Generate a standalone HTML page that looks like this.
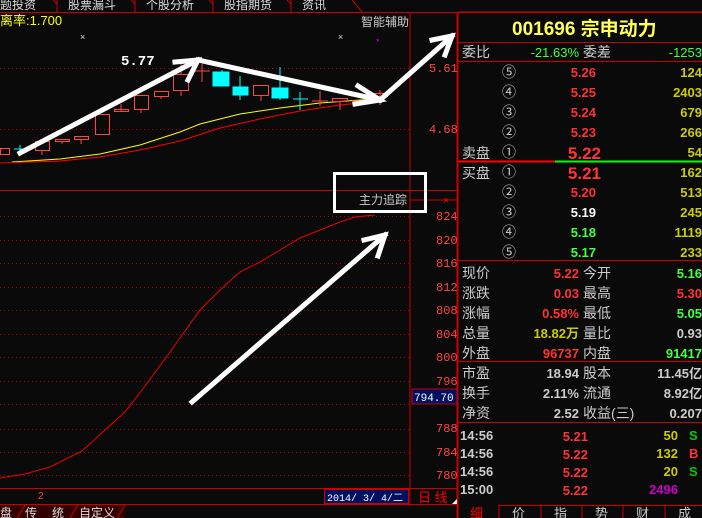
<!DOCTYPE html>
<html><head><meta charset="utf-8"><style>
body{margin:0;background:#0a0a0a;width:702px;height:518px;overflow:hidden}
svg{display:block;font-family:"Liberation Sans","Noto Sans CJK SC",sans-serif;font-size:13px}
.m{font-family:"Liberation Mono","Noto Sans CJK SC",monospace}
</style></head><body>
<svg width="702" height="518" xmlns="http://www.w3.org/2000/svg">
<rect width="702" height="518" fill="#0a0a0a"/>
<!-- top tabs -->
<g fill="#ddd" font-size="12">
<text x="0" y="9">题投资</text><text x="68" y="9">股票漏斗</text><text x="146" y="9">个股分析</text><text x="224" y="9">股指期货</text><text x="302" y="9">资讯</text>
</g>
<g stroke="#c00" fill="none">
<path d="M57 0V12M135 0V12M213 0V12M291 0V12M352 0L362 12M0 12.5H702"/>
<path d="M53 0L57 4M131 0L135 4M209 0L213 4M287 0L291 4"/>
<path d="M410 12V504M457 12V518M0 190.5H458M0 488.5H458M0 504.5H458M410 200H457"/>
</g>
<text x="0" y="25" fill="#ff0" font-size="13">离率:1.700</text>
<text x="361" y="26" fill="#ccc" font-size="12">智能辅助</text>
<text x="80" y="40" fill="#ddd" font-size="9">×</text><text x="338" y="40" fill="#ddd" font-size="9">×</text>
<text x="376" y="45" fill="#c0c" font-size="9">*</text>
<text x="121" y="65" fill="#fff" font-size="14" font-weight="bold" class="m">5.77</text>
<!-- dotted grid -->
<g stroke="#a00" stroke-dasharray="1 3">
<path d="M0 68.5H410M0 129.5H410"/>
<path d="M0 216.5H410M0 240.5H410M0 263.5H410M0 287.5H410M0 310.5H410M0 334.5H410M0 357.5H410M0 381.5H410M0 404.5H410M0 429.5H410M0 452.5H410M0 475.5H410"/>
</g>
<g fill="#f44" class="m" font-size="12"><text x="429" y="72">5.61</text><text x="429" y="133">4.68</text>
<text x="436" y="220">824</text><text x="436" y="244">820</text><text x="436" y="267">816</text><text x="436" y="291">812</text><text x="436" y="314">808</text><text x="436" y="338">804</text><text x="436" y="361">800</text><text x="436" y="385">796</text><text x="436" y="432">788</text><text x="436" y="456">784</text><text x="436" y="479">780</text></g>
<rect x="412" y="389" width="45" height="15" fill="#001060" stroke="#c00"/>
<text x="414" y="401" fill="#fff" class="m" font-size="11">794.70</text>
<text x="443" y="204" fill="#f00" font-size="11">×</text>
<!-- MAs -->
<polyline fill="none" stroke="#ff0" points="12,162 60,159 100,154 140,145 180,132 200,124 240,114 280,108 320,103 360,100 380,99"/>
<polyline fill="none" stroke="#f00" points="0,163 60,161 100,157 140,150 180,141 220,128 260,119 300,111 340,105 380,101"/>
<!-- candles -->
<g stroke="#f44" fill="none">
<rect x="0.5" y="148.5" width="9" height="6"/><rect x="35.5" y="141.5" width="14" height="9"/><path d="M42 150V155"/>
<rect x="55.5" y="139.5" width="14" height="2"/><path d="M62 141V144"/>
<rect x="74.5" y="136.5" width="14" height="3"/><path d="M81 139V144"/>
<rect x="95.5" y="114.5" width="14" height="20"/>
<rect x="114.5" y="109.5" width="14" height="2"/><path d="M121 104V112"/>
<rect x="134.5" y="95.5" width="14" height="14"/><path d="M141 109V113"/>
<rect x="154.5" y="91.5" width="14" height="5"/><path d="M161 96V99"/>
<rect x="173.5" y="74.5" width="15" height="16"/><path d="M181 60V75M181 90V96"/>
<path d="M194 71H210M202 64V82"/>
<rect x="253.5" y="85.5" width="15" height="10"/><path d="M261 95V101"/>
<path d="M312 101H328M320 91V106"/>
<rect x="332.5" y="98.5" width="15" height="3"/><path d="M340 101V110"/>
<path d="M352 101H368"/><rect x="373.5" y="93.5" width="14" height="3"/><path d="M380 90V105"/>
</g>
<g fill="#0ff" stroke="#0ff">
<path d="M14 149H26M20 145V152" fill="none"/>
<rect x="213" y="72" width="16" height="14"/><path d="M222 70V73"/>
<rect x="233" y="87" width="15" height="8"/><path d="M240 76V100"/>
<rect x="272" y="88" width="16" height="10"/><path d="M280 67V100"/>
<path d="M293 99H308M300 92V110" fill="none"/>
</g>
<!-- bottom curve -->
<polyline fill="none" stroke="#e00" points="0,478 25,474 50,467 82,451 105,430 125,412 145,386 165,359 185,331 200,310 220,290 240,272 260,262 280,250 300,238 320,230 340,222 355,217 375,215"/>
<!-- white arrows -->
<g stroke="#fff" stroke-width="5" fill="none" stroke-linecap="square">
<path d="M20 153L198 60M175 62L198 60L188 80"/>
<path d="M198 60L380 100M358 86L380 100L355 104"/>
<path d="M380 100L452 36M432 40L452 36L445 55"/>
<path d="M192 402L385 235M364 240L385 235L378 256"/>
</g>
<rect x="334.5" y="173.5" width="91" height="38" fill="none" stroke="#fff" stroke-width="3"/>
<text x="359" y="204" fill="#ccc" font-size="12">主力追踪</text>
<!-- bottom bar -->
<text x="38" y="499" fill="#f44" font-size="10">2</text>
<rect x="324.5" y="489.5" width="84" height="14" fill="#001060" stroke="#c00"/>
<text x="327" y="501" fill="#fff" class="m" font-size="10">2014/ 3/ 4/二</text>
<text x="418" y="502" fill="#f00" font-size="13">日 线</text>
<path d="M452 504L457 499V504Z" fill="#fff"/>
<rect x="0" y="505" width="125" height="13" fill="#300"/>
<g fill="#ddd" font-size="12"><text x="0" y="517">盘</text><text x="25" y="517">传</text><text x="52" y="517">统</text><text x="79" y="517">自定义</text></g>
<path d="M17 518L25 505M70 518L78 505M117 518L125 505" stroke="#c00"/>
<!-- right panel -->
<g stroke="#c00" fill="none">
<path d="M458 12H702M458 42.5H702M458 61.5H702M458 260.5H702M458 361.5H702M458 422.5H702M458 12V518"/>
<path d="M499 505V518M541 505V518M582 505V518M623 505V518M665 505V518M499 505.5H702"/>
</g>
<path d="M458 161.5H555" stroke="#f00" stroke-width="2"/><path d="M555 161.5H702" stroke="#0f0" stroke-width="2"/>
<text x="512" y="35" fill="#ff5" font-size="19" font-weight="bold">001696 宗申动力</text>
<g fill="#ccc" font-size="14">
<text x="462" y="57">委比</text><text x="583" y="57">委差</text>
<text x="462" y="158">卖盘</text><text x="462" y="178">买盘</text>
<text x="462" y="278">现价</text><text x="583" y="278">今开</text>
<text x="462" y="298">涨跌</text><text x="583" y="298">最高</text>
<text x="462" y="318">涨幅</text><text x="583" y="318">最低</text>
<text x="462" y="338">总量</text><text x="583" y="338">量比</text>
<text x="462" y="358">外盘</text><text x="583" y="358">内盘</text>
<text x="462" y="378">市盈</text><text x="583" y="378">股本</text>
<text x="462" y="398">换手</text><text x="583" y="398">流通</text>
<text x="462" y="418">净资</text><text x="583" y="418">收益(三)</text>
</g>
<g fill="#ccc" font-size="14">
<text x="502" y="77">⑤</text><text x="502" y="97">④</text><text x="502" y="117">③</text><text x="502" y="137">②</text><text x="502" y="157">①</text>
<text x="502" y="177">①</text><text x="502" y="197">②</text><text x="502" y="217">③</text><text x="502" y="237">④</text><text x="502" y="257">⑤</text>
</g>
<g font-size="13" font-weight="bold" text-anchor="end">
<text x="579" y="57" fill="#4f4" font-weight="normal">-21.63%</text><text x="702" y="57" fill="#4f4" font-weight="normal">-1253</text>
<text x="596" y="77" fill="#f33">5.26</text><text x="596" y="97" fill="#f33">5.25</text><text x="596" y="117" fill="#f33">5.24</text><text x="596" y="137" fill="#f33">5.23</text>
<text x="601" y="159" fill="#f33" font-size="17">5.22</text><text x="601" y="179" fill="#f33" font-size="17">5.21</text>
<text x="596" y="197" fill="#f33">5.20</text><text x="596" y="217" fill="#fff">5.19</text><text x="596" y="237" fill="#4f4">5.18</text><text x="596" y="257" fill="#4f4">5.17</text>
</g>
<g font-size="13" fill="#cc0" font-weight="bold" text-anchor="end">
<text x="702" y="77">124</text><text x="702" y="97">2403</text><text x="702" y="117">679</text><text x="702" y="137">266</text><text x="702" y="157">54</text>
<text x="702" y="177">162</text><text x="702" y="197">513</text><text x="702" y="217">245</text><text x="702" y="237">1119</text><text x="702" y="257">233</text>
</g>
<g font-size="13" font-weight="bold" text-anchor="end">
<text x="579" y="278" fill="#f33">5.22</text><text x="702" y="278" fill="#4f4">5.16</text>
<text x="579" y="298" fill="#f33">0.03</text><text x="702" y="298" fill="#f33">5.30</text>
<text x="579" y="318" fill="#f33">0.58%</text><text x="702" y="318" fill="#4f4">5.05</text>
<text x="579" y="338" fill="#cc0">18.82万</text><text x="702" y="338" fill="#ccc">0.93</text>
<text x="579" y="358" fill="#f33">96737</text><text x="702" y="358" fill="#4f4">91417</text>
<text x="579" y="378" fill="#ccc">18.94</text><text x="702" y="378" fill="#ccc">11.45亿</text>
<text x="579" y="398" fill="#ccc">2.11%</text><text x="702" y="398" fill="#ccc">8.92亿</text>
<text x="579" y="418" fill="#ccc">2.52</text><text x="702" y="418" fill="#ccc">0.207</text>
</g>
<g font-size="13" font-weight="bold">
<text x="460" y="440" fill="#ccc">14:56</text><text x="460" y="458" fill="#ccc">14:56</text><text x="460" y="476" fill="#ccc">14:56</text><text x="460" y="494" fill="#ccc">15:00</text>
<g text-anchor="end" fill="#f33"><text x="588" y="441">5.21</text><text x="588" y="459">5.22</text><text x="588" y="477">5.22</text><text x="588" y="495">5.22</text></g>
<g text-anchor="end" fill="#cc0"><text x="678" y="440">50</text><text x="678" y="458">132</text><text x="678" y="476">20</text><text x="678" y="494" fill="#c0c">2496</text></g>
<text x="689" y="440" fill="#0c0">S</text><text x="689" y="458" fill="#f33">B</text><text x="689" y="476" fill="#0c0">S</text>
</g>
<g font-size="13" fill="#ccc"><text x="470" y="518" fill="#f00">细</text><text x="512" y="518">价</text><text x="554" y="518">指</text><text x="595" y="518">势</text><text x="636" y="518">财</text><text x="678" y="518">成</text></g>
</svg>
</body></html>
